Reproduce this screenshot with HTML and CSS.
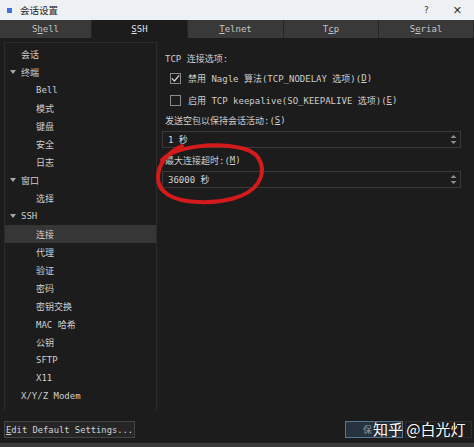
FILE: index.html
```html
<!DOCTYPE html>
<html lang="zh-CN">
<head>
    <meta charset="UTF-8">
    <title>会话设置</title>
    <link rel="stylesheet" href="styles.css">
</head>
<body>
<div class="window">
    <div class="titlebar">
        <span class="app-icon"></span>
        <span class="title">会话设置</span>
        <span class="spacer"></span>
        <span class="help">?</span>
        <span class="close">✕</span>
    </div>

    <div class="tabs">
        <div class="tab">S<u>h</u>ell</div>
        <div class="tab active"><u>S</u>SH</div>
        <div class="tab"><u>T</u>elnet</div>
        <div class="tab">T<u>c</u>p</div>
        <div class="tab">S<u>e</u>rial</div>
    </div>

    <div class="main">
        <div class="tree">
            <div class="row"><span class="twisty"></span>会话</div>
            <div class="row"><span class="twisty"><i class="caret"></i></span>终端</div>
            <div class="row child"><span class="twisty"></span>Bell</div>
            <div class="row child"><span class="twisty"></span>模式</div>
            <div class="row child"><span class="twisty"></span>键盘</div>
            <div class="row child"><span class="twisty"></span>安全</div>
            <div class="row child"><span class="twisty"></span>日志</div>
            <div class="row"><span class="twisty"><i class="caret"></i></span>窗口</div>
            <div class="row child"><span class="twisty"></span>选择</div>
            <div class="row"><span class="twisty"><i class="caret"></i></span>SSH</div>
            <div class="row child selected"><span class="twisty"></span>连接</div>
            <div class="row child"><span class="twisty"></span>代理</div>
            <div class="row child"><span class="twisty"></span>验证</div>
            <div class="row child"><span class="twisty"></span>密码</div>
            <div class="row child"><span class="twisty"></span>密钥交换</div>
            <div class="row child"><span class="twisty"></span>MAC 哈希</div>
            <div class="row child"><span class="twisty"></span>公钥</div>
            <div class="row child"><span class="twisty"></span>SFTP</div>
            <div class="row child"><span class="twisty"></span>X11</div>
            <div class="row"><span class="twisty"></span>X/Y/Z Modem</div>
        </div>

        <div class="settings">
            <div class="label">TCP 连接选项:</div>
            <div class="check-row">
                <span class="checkbox">
                    <svg width="11" height="11" viewBox="0 0 11 11"><path d="M1.8 5.3 L4.4 8 L9.2 2.3" fill="none" stroke="#d8d8d8" stroke-width="1.2"/></svg>
                </span>
                禁用 Nagle 算法(TCP_NODELAY 选项)(<u>D</u>)
            </div>
            <div class="check-row">
                <span class="checkbox"></span>
                启用 TCP keepalive(SO_KEEPALIVE 选项)(<u>E</u>)
            </div>
            <div class="label">发送空包以保持会话活动:(<u>S</u>)</div>
            <div class="spinbox">
                <span>1 秒</span>
                <svg class="arrows" width="7" height="11" viewBox="0 0 7 11"><path d="M0.5 4 L3.5 1 L6.5 4 Z M0.5 7 L3.5 10 L6.5 7 Z" fill="#8c8c8c"/></svg>
            </div>
            <div class="label gap">最大连接超时:(<u>M</u>)</div>
            <div class="spinbox">
                <span>36000 秒</span>
                <svg class="arrows" width="7" height="11" viewBox="0 0 7 11"><path d="M0.5 4 L3.5 1 L6.5 4 Z M0.5 7 L3.5 10 L6.5 7 Z" fill="#8c8c8c"/></svg>
            </div>
        </div>
    </div>

    <div class="footer">
        <button class="btn"><u>E</u>dit Default Settings...</button>
        <span class="spacer"></span>
        <button class="btn primary">保</button>
        <button class="btn cancel"></button>
    </div>
    <div class="bottom-strip"></div>

    <svg class="scribble" width="474" height="447" viewBox="0 0 474 447">
        <path d="M162 160 C174 147 215 141 245 149 C262 154 266 170 258 183 C248 198 222 203 198 202 C172 201 157 192 158 176 C159 163 168 152 182 146" fill="none" stroke="#d41a1a" stroke-width="4" stroke-linecap="round"/>
    </svg>
    <div class="watermark">知乎 @白光灯</div>
</div>
</body>
</html>
```

FILE: styles.css
```css
body {
    margin: 0;
    background: #1c1c1c;
    font-family: "DejaVu Sans Mono", "Noto Sans CJK SC", monospace;
    font-size: 9px;
    color: #cdcdcd;
}
.window {
    position: relative;
    width: 474px;
    height: 447px;
    display: flex;
    flex-direction: column;
    overflow: hidden;
}
.titlebar {
    height: 20px;
    background: #eef1f3;
    display: flex;
    align-items: center;
    padding-left: 7px;
    color: #1e1e1e;
    font-family: "Noto Sans CJK SC", sans-serif;
}
.app-icon {
    width: 5px;
    height: 5px;
    background: #3d6fe6;
    margin-right: 8px;
}
.title {
    font-size: 9.5px;
}
.spacer {
    flex: 1;
}
.help {
    font-family: "DejaVu Sans", sans-serif;
    font-size: 9px;
    margin-right: 24px;
    color: #333;
}
.close {
    font-family: "DejaVu Sans", sans-serif;
    font-size: 11px;
    margin-right: 12px;
    color: #333;
}
.tabs {
    height: 18px;
    display: grid;
    grid-template-columns: 92px 96px 96px 95px 95px;
    background: #2a2a2a;
}
.tab {
    background: #393939;
    border-right: 1px solid #262626;
    display: flex;
    align-items: center;
    justify-content: center;
    color: #c4c4c4;
}
.tab.active {
    background: #1c1c1c;
    color: #e0e0e0;
}
.main {
    flex: 1;
    display: flex;
}
.tree {
    width: 151px;
    margin: 4px 0 0 4px;
    border: 1px solid #2b2b2b;
    border-bottom: none;
    padding-top: 2px;
}
.row {
    height: 18px;
    display: flex;
    align-items: center;
    padding-left: 2px;
    color: #cfcfcf;
}
.row.child {
    padding-left: 17px;
}
.row.selected {
    background: #363636;
}
.twisty {
    width: 14px;
    display: flex;
    align-items: center;
}
.caret {
    width: 0;
    height: 0;
    margin-left: 3px;
    border-left: 3px solid transparent;
    border-right: 3px solid transparent;
    border-top: 4px solid #a8a8a8;
}
.settings {
    flex: 1;
    padding: 11px 13px 0 5px;
}
.label {
    height: 18px;
    display: flex;
    align-items: center;
    padding-left: 3px;
}
.label.gap {
    margin-top: 3px;
}
.check-row {
    height: 22px;
    display: flex;
    align-items: center;
    padding-left: 8px;
}
.checkbox {
    width: 11px;
    height: 11px;
    border: 1px solid #8a8a8a;
    box-sizing: border-box;
    margin-right: 7px;
    display: flex;
    align-items: center;
    justify-content: center;
}
.checkbox svg {
    flex: none;
}
.spinbox {
    height: 17px;
    margin-top: 2px;
    border: 1px solid #3a3a3a;
    box-sizing: border-box;
    display: flex;
    align-items: center;
    justify-content: space-between;
    padding: 0 3px 0 5px;
    color: #d4d4d4;
}
.footer {
    height: 33px;
    display: flex;
    align-items: flex-start;
    padding: 11px 2px 0 4px;
    box-sizing: border-box;
    gap: 2px;
}
.btn {
    height: 17px;
    padding: 0 1px;
    background: #262626;
    border: 1px solid #444;
    color: #d2d2d2;
    font-family: inherit;
    font-size: 8.8px;
}
.btn.primary {
    width: 58px;
    background: #26323d;
    border-color: #56768f;
    text-align: left;
    padding-left: 17px;
    color: #9a9a9a;
}
.btn.cancel {
    width: 67px;
    background: #1e1e1e;
    border-color: #2e2e2e;
}
.bottom-strip {
    height: 4px;
    background: #3a3a3a;
}
.scribble {
    position: absolute;
    left: 0;
    top: 0;
    pointer-events: none;
}
.watermark {
    position: absolute;
    left: 373px;
    top: 419px;
    font-family: "Noto Sans CJK SC", sans-serif;
    font-size: 15px;
    line-height: 20px;
    color: #ffffff;
    text-shadow: 0 0 2px rgba(0, 0, 0, 0.6);
    white-space: nowrap;
}
```
